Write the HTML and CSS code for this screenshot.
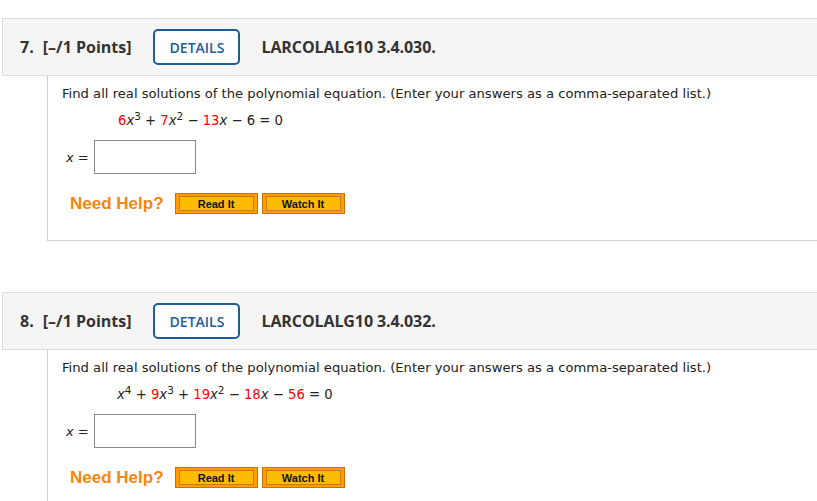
FILE: index.html
```html
<!DOCTYPE html>
<html>
<head>
<meta charset="utf-8">
<link rel="stylesheet" href="styles.css">
</head>
<body>
<div class="question first">
  <div class="q-header">
    <span class="q-num">7.</span>
    <span class="q-points">[–/1 Points]</span>
    <span class="details">DETAILS</span>
    <span class="q-code">LARCOLALG10 3.4.030.</span>
  </div>
  <div class="q-body">
    <p class="prompt">Find all real solutions of the polynomial equation. (Enter your answers as a comma-separated list.)</p>
    <p class="eq eq1"><span class="r">6</span><i>x</i><sup>3</sup> + <span class="r">7</span><i>x</i><sup>2</sup> − <span class="r">13</span><i>x</i> − 6 = 0</p>
    <div class="answer"><span class="lbl"><i>x</i> =</span><span class="box"></span></div>
    <div class="help">
      <span class="need">Need Help?</span>
      <span class="btn"><span class="btn-in">Read It</span></span>
      <span class="btn"><span class="btn-in">Watch It</span></span>
    </div>
  </div>
</div>
<div class="question second">
  <div class="q-header">
    <span class="q-num">8.</span>
    <span class="q-points">[–/1 Points]</span>
    <span class="details">DETAILS</span>
    <span class="q-code">LARCOLALG10 3.4.032.</span>
  </div>
  <div class="q-body">
    <p class="prompt">Find all real solutions of the polynomial equation. (Enter your answers as a comma-separated list.)</p>
    <p class="eq eq2"><i>x</i><sup>4</sup> + <span class="r">9</span><i>x</i><sup>3</sup> + <span class="r">19</span><i>x</i><sup>2</sup> − <span class="r">18</span><i>x</i> − <span class="r">56</span> = 0</p>
    <div class="answer"><span class="lbl"><i>x</i> =</span><span class="box"></span></div>
    <div class="help">
      <span class="need">Need Help?</span>
      <span class="btn"><span class="btn-in">Read It</span></span>
      <span class="btn"><span class="btn-in">Watch It</span></span>
    </div>
  </div>
</div>
</body>
</html>
```
FILE: styles.css
```css
html, body {
  margin: 0;
  padding: 0;
  background: #fff;
}
body {
  font-family: "DejaVu Sans", Verdana, sans-serif;
  color: #222;
  width: 817px;
  overflow: hidden;
}
.question {
  margin-left: 2px;
  width: 840px;
}
.question.first { margin-top: 18px; }
.question.second { margin-top: 51px; }
.q-header {
  height: 56px;
  background: #f5f5f5;
  border: 1px solid #dcdcdc;
  border-right: none;
  display: flex;
  align-items: center;
  padding-left: 17px;
  font-family: "Open Sans", sans-serif;
  font-weight: 700;
  font-size: 16px;
  color: #333;
}
.q-num { margin-right: 9px; }
.q-points { margin-right: 22px; }
.details {
  box-sizing: border-box;
  width: 87px;
  height: 36px;
  border: 2px solid #1b5e9b;
  border-radius: 5px;
  color: #1b5e9b;
  font-weight: 600;
  font-size: 14px;
  display: flex;
  align-items: center;
  justify-content: center;
  margin-right: 21px;
  background: #fff;
}
.q-code { letter-spacing: -0.1px; }
.q-body {
  margin-left: 45px;
  border-left: 1px solid #cfcfcf;
  border-bottom: 1px solid #cfcfcf;
  height: 164px;
  padding-left: 14px;
}
.prompt {
  margin: 0;
  padding-top: 10px;
  font-size: 13.15px;
  line-height: 16px;
  color: #222;
}
.eq {
  margin: 10px 0 0 56px;
  font-size: 13.2px;
  line-height: 18px;
  color: #222;
}
.eq.eq2 { margin-left: 55px; }
.eq i { font-style: italic; }
.eq sup { font-size: 10.5px; line-height: 0; vertical-align: 5px; }
.r { color: #f00; }
.answer {
  display: flex;
  align-items: center;
  margin-top: 10px;
  margin-left: 4px;
  font-size: 13px;
}
.lbl { width: 28px; }
.box {
  box-sizing: border-box;
  width: 102px;
  height: 34px;
  border: 1px solid #888;
  background: #fff;
}
.help {
  display: flex;
  align-items: center;
  margin-top: 19px;
  margin-left: 8px;
}
.need {
  font-family: "Liberation Sans", Arial, sans-serif;
  font-weight: 700;
  font-size: 17px;
  color: #f7850e;
  margin-right: 11px;
}
.btn {
  box-sizing: border-box;
  width: 83px;
  height: 21px;
  border: 1px solid #c87400;
  background: #ff9d00;
  padding: 2px 3px;
  margin-right: 4px;
  display: flex;
}
.btn-in {
  flex: 1;
  border: 1px solid #c87a10;
  background: #ffbb00;
  font-family: "Liberation Sans", Arial, sans-serif;
  font-weight: 700;
  font-size: 11px;
  color: #111;
  display: flex;
  align-items: center;
  justify-content: center;
}
```
